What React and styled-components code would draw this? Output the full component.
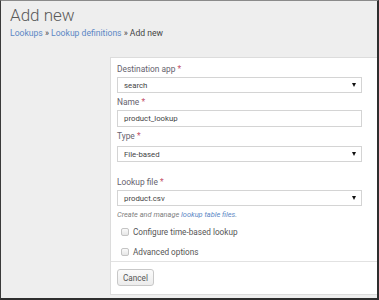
import React from 'react';
import styled, { createGlobalStyle } from 'styled-components';

const GlobalStyle = createGlobalStyle`
  html, body {
    margin: 0;
    padding: 0;
    background: #eeeeee;
  }
  * {
    box-sizing: border-box;
  }
`;

const Frame = styled.div`
  width: 379px;
  height: 300px;
  overflow: hidden;
  background: #eeeeee;
  border-top: 1px solid #8a8a8a;
  border-left: 1px solid #3a3a3a;
  border-right: 2px solid #2e2e2e;
  border-bottom: 2px solid #2e2e2e;
  font-family: Roboto, "Liberation Sans", Arial, sans-serif;
  padding: 4px 0 0 9px;
`;

const Title = styled.h1`
  margin: 0;
  font-size: 17px;
  line-height: 20px;
  font-weight: 300;
  color: #5a5a5a;
`;

const Crumbs = styled.div`
  margin-top: 3px;
  font-size: 8.6px;
  line-height: 11px;
  color: #444;
`;

const Crumb = styled.a`
  color: #5b87c5;
  text-decoration: none;
`;

const Panel = styled.div`
  margin: 18px 0 0 100px;
  width: 300px;
  background: #fff;
  border: 1px solid #dcdcdc;
`;

const Body = styled.div`
  padding: 6px 0 0 6px;
`;

const Label = styled.div`
  font-size: 8.4px;
  line-height: 10px;
  color: #66626e;
  margin-top: ${(props) => props.top || 0}px;
  margin-bottom: ${(props) => props.below || 3}px;
`;

const Req = styled.span`
  color: #c4506a;
`;

const Box = styled.div`
  position: relative;
  width: 245px;
  height: ${(props) => props.h || 16}px;
  border: 1px solid #d4d4d4;
  background: #fff;
  font-size: 7.8px;
  color: #444;
  display: flex;
  align-items: center;
  padding-left: 6px;
`;

const Arrow = styled.span`
  position: absolute;
  right: 5px;
  top: 50%;
  margin-top: -2px;
  width: 0;
  height: 0;
  border-left: 2.5px solid transparent;
  border-right: 2.5px solid transparent;
  border-top: 4px solid #111;
`;

const Help = styled.div`
  margin-top: 4px;
  font-size: 7.4px;
  line-height: 10px;
  font-style: italic;
  color: #808080;
`;

const HelpLink = styled.a`
  color: #5b87c5;
  text-decoration: none;
`;

const CheckRow = styled.label`
  display: flex;
  align-items: center;
  gap: 4px;
  margin-top: ${(props) => props.top || 0}px;
  padding-left: 4px;
  height: 13px;
  font-size: 8.2px;
  color: #555;
`;

const Check = styled.span`
  width: 8px;
  height: 8px;
  border: 1px solid #c4c4c4;
  border-radius: 2px;
  background: linear-gradient(#fafafa, #e6e6e6);
`;

const Footer = styled.div`
  margin-top: 3px;
  border-top: 1px solid #e2e2e2;
  padding: 7px 0 8px 6px;
`;

const Button = styled.button`
  display: block;
  height: 17px;
  padding: 0 5px;
  border: 1px solid #c8c8c8;
  border-radius: 3px;
  background: linear-gradient(#fbfbfb, #ececec);
  font-family: Roboto, "Liberation Sans", Arial, sans-serif;
  font-size: 8.2px;
  color: #555;
`;

function Select({ value }) {
  return (
    <Box>
      {value}
      <Arrow />
    </Box>
  );
}

export default function App() {
  return (
    <Frame>
      <GlobalStyle />
      <Title>Add new</Title>
      <Crumbs>
        <Crumb href="#">Lookups</Crumb>
        {' » '}
        <Crumb href="#">Lookup definitions</Crumb>
        {' » Add new'}
      </Crumbs>
      <Panel>
        <Body>
          <Label>
            Destination app <Req>*</Req>
          </Label>
          <Select value="search" />
          <Label top={4}>
            Name <Req>*</Req>
          </Label>
          <Box h={17}>product_lookup</Box>
          <Label top={4} below={5}>
            Type <Req>*</Req>
          </Label>
          <Select value="File-based" />
          <Label top={15}>
            Lookup file <Req>*</Req>
          </Label>
          <Select value="product.csv" />
          <Help>
            Create and manage <HelpLink href="#">lookup table files</HelpLink>.
          </Help>
          <CheckRow top={5}>
            <Check />
            Configure time-based lookup
          </CheckRow>
          <CheckRow top={7}>
            <Check />
            Advanced options
          </CheckRow>
        </Body>
        <Footer>
          <Button>Cancel</Button>
        </Footer>
      </Panel>
    </Frame>
  );
}
